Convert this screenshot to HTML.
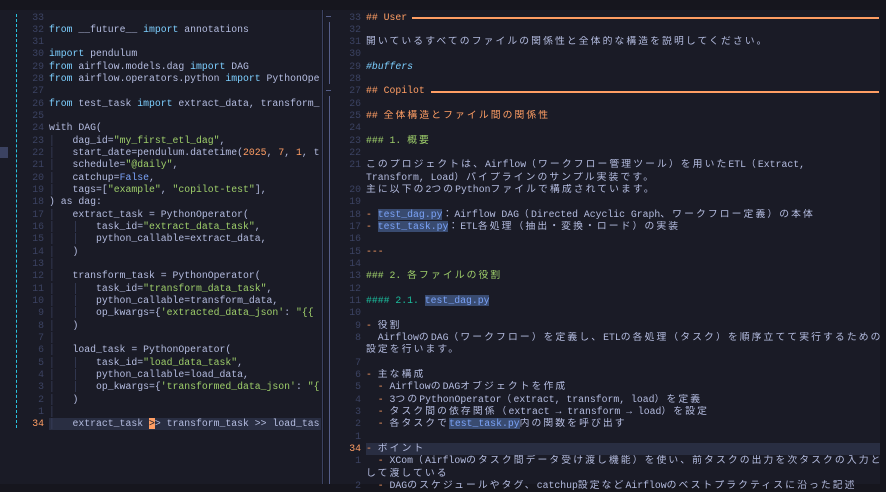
<!DOCTYPE html>
<html><head><meta charset="utf-8"><style>
*{margin:0;padding:0;box-sizing:border-box}
body{width:886px;height:484px;background:#16161e;overflow:hidden;font-family:"Liberation Mono","Noto Sans CJK JP",monospace;font-size:9.8px;color:#b4bce0;position:relative}
.pane{position:absolute;top:10px;bottom:0;background:#1a1b26}
.r{position:absolute;height:12.33px;line-height:12.33px;white-space:pre}
.n{position:absolute;text-align:right;color:#3b4261;white-space:pre;height:12.33px;line-height:12.33px}
.k{color:#7dcfff}.s{color:#9ece6a}.o{color:#ff9e64}.f{color:#7aa2f7}
.j{letter-spacing:2.1px}
.h2{color:#ff9e64}.h3{color:#9ece6a}.h4{color:#1abc9c}
.hl{background:#394b70;color:#7aa2f7}
.g{color:#3b4261}
</style></head><body>
<div class="pane" style="left:0;width:323px"></div>
<div class="pane" style="left:324px;width:556px"></div>
<div style="position:absolute;left:322px;top:10px;width:1px;height:474px;background:#3b4261"></div>
<div style="position:absolute;left:16px;top:14px;height:414px;border-left:1px dashed #2ac3de"></div>
<div style="position:absolute;left:0;top:147px;width:8px;height:11px;background:#3b4261"></div>
<div style="position:absolute;left:329px;top:22px;width:1px;height:62px;background:#565f89"></div>
<div style="position:absolute;left:329px;top:96px;width:1px;height:388px;background:#565f89"></div>
<div style="position:absolute;left:326px;top:16px;width:5px;height:1px;background:#565f89"></div>
<div style="position:absolute;left:326px;top:90px;width:5px;height:1px;background:#565f89"></div>
<div style="position:absolute;left:49px;top:418px;width:272px;height:12px;background:#292e42"></div>
<div style="position:absolute;left:366px;top:443px;width:514px;height:12px;background:#292e42"></div>
<div id="L"></div><div id="R"></div>
<script>
const T=11.5;
const L=[
["33",""],["32",'<span class="k">from</span> __future__ <span class="k">import</span> annotations'],["31",""],
["30",'<span class="k">import</span> pendulum'],["29",'<span class="k">from</span> airflow.models.dag <span class="k">import</span> DAG'],
["28",'<span class="k">from</span> airflow.operators.python <span class="k">import</span> PythonOpe'],["27",""],
["26",'<span class="k">from</span> test_task <span class="k">import</span> extract_data, transform_'],["25",""],
["24",'with DAG('],["23",'<span class="g">│</span>   dag_id=<span class="s">"my_first_etl_dag"</span>,'],
["22",'<span class="g">│</span>   start_date=pendulum.datetime(<span class="o">2025</span>, <span class="o">7</span>, <span class="o">1</span>, t'],
["21",'<span class="g">│</span>   schedule=<span class="s">"@daily"</span>,'],["20",'<span class="g">│</span>   catchup=<span class="f">False</span>,'],
["19",'<span class="g">│</span>   tags=[<span class="s">"example"</span>, <span class="s">"copilot-test"</span>],'],["18",') as dag:'],
["17",'<span class="g">│</span>   extract_task = PythonOperator('],["16",'<span class="g">│   │</span>   task_id=<span class="s">"extract_data_task"</span>,'],
["15",'<span class="g">│   │</span>   python_callable=extract_data,'],["14",'<span class="g">│</span>   )'],["13",'<span class="g">│</span>'],
["12",'<span class="g">│</span>   transform_task = PythonOperator('],["11",'<span class="g">│   │</span>   task_id=<span class="s">"transform_data_task"</span>,'],
["10",'<span class="g">│   │</span>   python_callable=transform_data,'],["9",'<span class="g">│   │</span>   op_kwargs={<span class="s">\'extracted_data_json\'</span>: <span class="s">"{{</span>'],
["8",'<span class="g">│</span>   )'],["7",'<span class="g">│</span>'],["6",'<span class="g">│</span>   load_task = PythonOperator('],
["5",'<span class="g">│   │</span>   task_id=<span class="s">"load_data_task"</span>,'],["4",'<span class="g">│   │</span>   python_callable=load_data,'],
["3",'<span class="g">│   │</span>   op_kwargs={<span class="s">\'transformed_data_json\'</span>: <span class="s">"{</span>'],["2",'<span class="g">│</span>   )'],["1",'<span class="g">│</span>'],
["34",'<span class="g">│</span>   extract_task <span style="background:#ff9e64;color:#1a1b26">&gt;</span>&gt; transform_task &gt;&gt; load_tas']
];
let h="";
L.forEach((l,i)=>{const y=T+i*12.33;
h+=`<div class="n" style="left:20px;width:24px;top:${y}px;${l[0]=="34"?"color:#ff9e64":""}">${l[0]}</div><div class="r" style="left:49px;top:${y}px;width:272px;overflow:hidden">${l[1]}</div>`});
document.getElementById("L").innerHTML=h;
const J=t=>`<span class="j">${t}</span>`;
const R=[
["33",'<span class="h2">## User</span>'],["32",""],["31",J("開いているすべてのファイルの関係性と全体的な構造を説明してください。")],["30",""],
["29",'<i style="color:#7dcfff">#buffers</i>'],["28",""],["27",'<span class="h2">## Copilot</span>'],["26",""],
["25",'<span class="h2">## '+J("全体構造とファイル間の関係性")+'</span>'],["24",""],["23",'<span class="h3">### 1. '+J("概要")+'</span>'],["22",""],
["21",J("このプロジェクトは、")+"Airflow"+J("（ワークフロー管理ツール）を用いた")+"ETL"+J("（")+"Extract,"],["",'Transform, Load'+J("）パイプラインのサンプル実装です。")],
["20",J("主に以下の")+"2"+J("つの")+"Python"+J("ファイルで構成されています。")],["19",""],
["18",'<span class="o">-</span> <span class="hl">test_dag.py</span>'+J("：")+"Airflow DAG"+J("（")+"Directed Acyclic Graph"+J("、ワークフロー定義）の本体")],
["17",'<span class="o">-</span> <span class="hl">test_task.py</span>'+J("：")+"ETL"+J("各処理（抽出・変換・ロード）の実装")],["16",""],
["15",'<span class="o">---</span>'],["14",""],["13",'<span class="h3">### 2. '+J("各ファイルの役割")+'</span>'],["12",""],
["11",'<span class="h4">#### 2.1. </span><span class="hl">test_dag.py</span>'],["10",""],["9",'<span class="o">-</span> '+J("役割")],
["8","  Airflow"+J("の")+"DAG"+J("（ワークフロー）を定義し、")+"ETL"+J("の各処理（タスク）を順序立てて実行するための")],["",J("設定を行います。")],
["7",""],["6",'<span class="o">-</span> '+J("主な構成")],["5",'  <span class="o">-</span> Airflow'+J("の")+"DAG"+J("オブジェクトを作成")],
["4",'  <span class="o">-</span> 3'+J("つの")+"PythonOperator"+J("（")+"extract, transform, load"+J("）を定義")],
["3",'  <span class="o">-</span> '+J("タスク間の依存関係（")+"extract → transform → load"+J("）を設定")],
["2",'  <span class="o">-</span> '+J("各タスクで")+'<span class="hl">test_task.py</span>'+J("内の関数を呼び出す")],["1",""],
["34",'<span class="o">-</span> '+J("ポイント")],["1",'  <span class="o">-</span> XCom'+J("（")+"Airflow"+J("のタスク間データ受け渡し機能）を使い、前タスクの出力を次タスクの入力と")],
["",J("して渡している")],["2",'  <span class="o">-</span> DAG'+J("のスケジュールやタグ、")+"catchup"+J("設定など")+"Airflow"+J("のベストプラクティスに沿った記述")]
];
h="";
R.forEach((l,i)=>{const y=T+i*12.33;
h+=`<div class="n" style="left:336px;width:25px;top:${y}px;${l[0]=="34"?"color:#ff9e64":""}">${l[0]}</div><div class="r" style="left:366px;top:${y}px;width:514px;overflow:hidden">${l[1]}</div>`});
document.getElementById("R").innerHTML=h;
</script>
<div style="position:absolute;left:412px;top:17px;width:467px;height:1.5px;background:#ff9e64"></div>
<div style="position:absolute;left:431px;top:91px;width:448px;height:1.5px;background:#ff9e64"></div>
</body></html>
